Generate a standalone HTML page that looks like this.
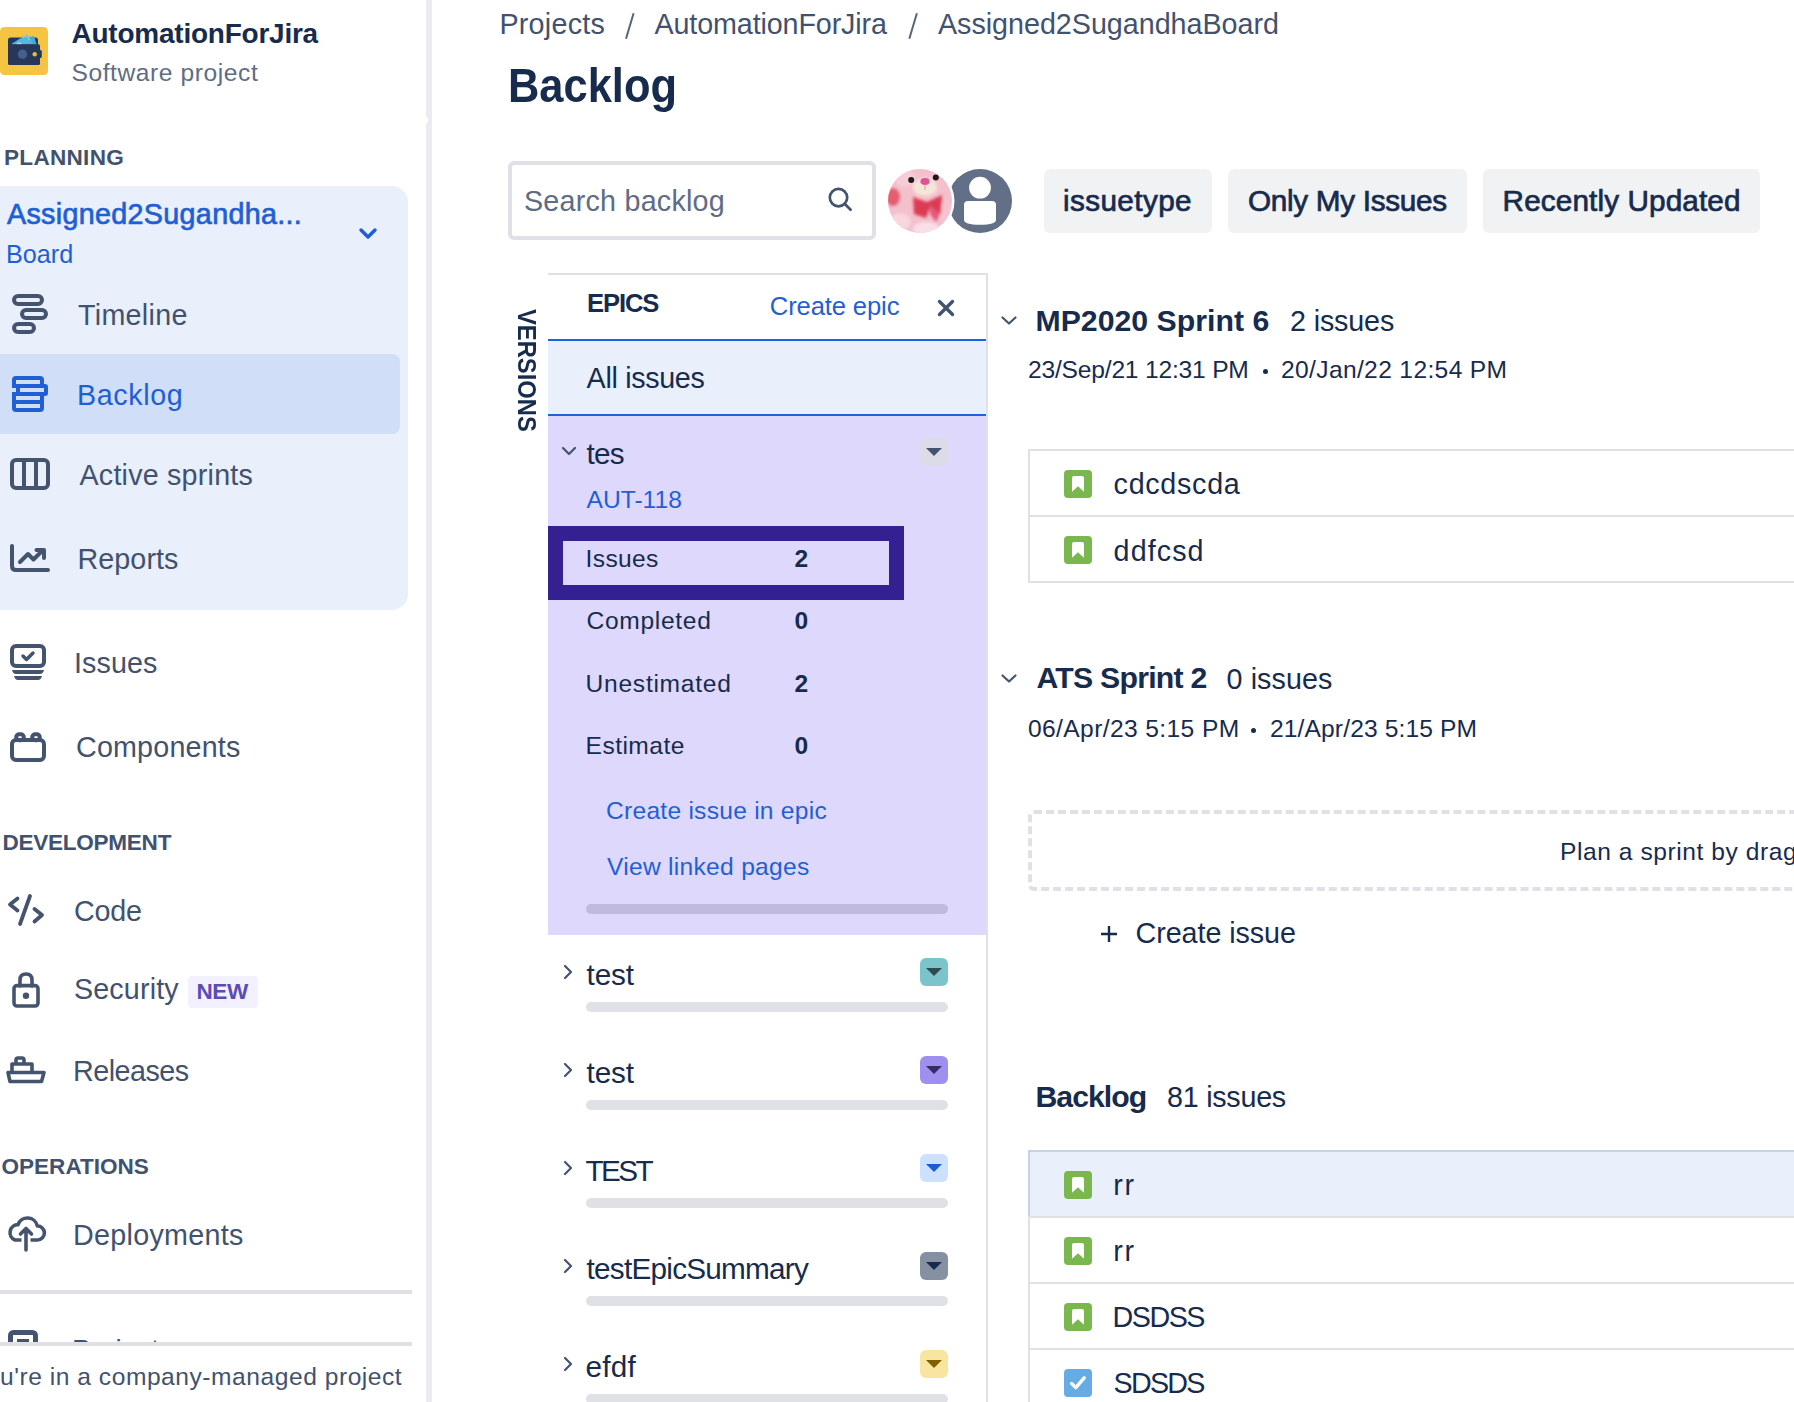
<!DOCTYPE html>
<html><head><meta charset="utf-8"><style>
html,body{margin:0;padding:0;width:1794px;height:1402px;overflow:hidden;background:#fff;font-family:'Liberation Sans', sans-serif;}
div{white-space:nowrap}
</style></head><body>
<div style="position:relative;width:1794px;height:1402px;overflow:hidden">
<div style="position:absolute;left:426px;top:0;width:6px;height:1402px;background:#ebecf0"></div><div style="position:absolute;left:423px;top:117.4px;width:5.2px;height:5.2px;border-radius:50%;background:#fff"></div>
<svg style="position:absolute;left:0;top:27px" width="48" height="48" viewBox="0 0 48 48">
<rect x="0" y="0" width="48" height="48" rx="4.5" fill="#f6c443"/>
<rect x="8" y="10.5" width="30" height="10" rx="2.5" fill="#1c3b60"/>
<polygon points="10.5,17.5 26.5,7.5 29.5,10 37,17.5" fill="#58b5de"/>
<polygon points="29.5,10 34,9 36.5,17.5 33,17.5" fill="#4aa6d3"/>
<path d="M23 10.5 L26.5 8.5 L29.5 13" stroke="#a8dff2" stroke-width="0.9" fill="none"/>
<polygon points="15,17.5 19.5,15 23,17.5" fill="#9dd5ee"/>
<rect x="8" y="17.2" width="32" height="20.8" rx="1.5" fill="#283758"/>
<rect x="30.8" y="23" width="11" height="8" rx="1.5" fill="#1e3a5f"/>
<circle cx="22.5" cy="27.2" r="4.7" fill="#42608f"/>
<circle cx="34.7" cy="27.2" r="2.2" fill="#f5b73b"/>
</svg>
<div style="position:absolute;left:0;top:186px;width:408px;height:424px;background:#e9f0fc;border-radius:0 16px 16px 0"></div>
<div style="position:absolute;left:0;top:354px;width:400px;height:80px;background:#d0def8;border-radius:0 8px 8px 0"></div>
<svg style="position:absolute;left:358px;top:226px" width="20" height="16" viewBox="0 0 20 16"><path d="M3 4 L10 11 L17 4" stroke="#1f5fd6" stroke-width="3.5" fill="none" stroke-linecap="round" stroke-linejoin="round"/></svg>
<div style="position:absolute;left:188px;top:976px;width:70px;height:32px;background:#f3f0ff;border-radius:4px"></div>
<svg style="position:absolute;left:0;top:280px" width="60" height="1000" viewBox="0 280 60 1000" fill="none" stroke="#44546f" stroke-width="4" stroke-linecap="round" stroke-linejoin="round">
<rect x="14" y="296" width="28" height="8" rx="4"/>
<rect x="22" y="310" width="24" height="8" rx="4"/>
<rect x="14" y="324" width="20" height="8" rx="4"/>
<rect x="12" y="460" width="36" height="28" rx="4"/>
<path d="M24 460 V488 M36 460 V488" stroke-linecap="butt"/>
<path d="M12 546 V566 Q12 570 16 570 H48"/>
<path d="M20 562 L28 554 L33.5 559.5 L43 550 M36.5 550 H44 V558" />
<rect x="12" y="646" width="32" height="20" rx="4"/>
<path d="M23 656 L26.5 659.5 L33 653" stroke-width="3.5"/>
<path d="M12 670 H44 Q43 674 40 674 H16 Q13 674 12 670 Z M14 676 H42 Q41 680 38 680 H18 Q15 680 14 676 Z" fill="#44546f" stroke="none"/>
<rect x="12" y="740" width="32" height="20" rx="4"/>
<rect x="16.2" y="734.3" width="7.6" height="6" rx="3"/>
<rect x="32.2" y="734.3" width="7.6" height="6" rx="3"/>
<path d="M17.5 898.5 L10 904.5 L17.5 910.5 M34.5 909 L42 915 L34.5 921.5 M30 896 L20 924" stroke-width="3.8"/>
<path d="M20 986 V980 Q20 974 26 974 Q32 974 32 980 V986" stroke-width="3.6"/>
<rect x="14" y="985.6" width="24" height="20.4" rx="3" stroke-width="3.6"/>
<circle cx="26" cy="995.8" r="3.2" fill="#44546f" stroke="none"/>
<path d="M8 1072.5 H44 L41.5 1081.5 H10 Z" stroke-width="3.6"/>
<path d="M12 1072 V1064 H32 V1072 M16 1064 V1060 Q16 1058 18 1058 H22 Q24 1058 24 1060 V1064" stroke-width="3.6" stroke-linejoin="round"/>
<path d="M21.5 1240 H15 A8 8 0 0 1 18.1 1224.6 A10 10 0 0 1 37.3 1226 A7 7 0 0 1 37.5 1240 H30.5" stroke-width="3.6" stroke-linecap="butt"/>
<path d="M26 1250 V1230 M20.5 1234 L26 1228.5 L31.5 1234" stroke-width="3.6"/>
<g fill="#1f5fd6" stroke="none">
<rect x="12" y="376" width="32" height="36" rx="4"/>
<rect x="16" y="384" width="32" height="12" rx="3"/>
</g>
<g fill="#d0def8" stroke="none">
<rect x="16" y="380" width="24" height="4"/>
<rect x="20" y="388" width="24" height="4"/>
<rect x="16" y="396" width="24" height="4"/>
<rect x="16" y="404" width="24" height="4"/>
<rect x="11" y="388" width="5" height="4"/>
</g>
</svg>
<svg style="position:absolute;left:42px;top:0" width="1" height="1"></svg>
<div style="position:absolute;left:21px;top:982px;width:10px;height:10px"></div>
<div style="position:absolute;left:0;top:1290px;width:412px;height:4px;background:#dfe1e6"></div>
<div style="position:absolute;left:0;top:1294px;width:412px;height:48px;overflow:hidden">
<svg style="position:absolute;left:8px;top:36px" width="30" height="30" viewBox="0 0 30 30" fill="none" stroke="#44546f" stroke-width="5"><rect x="2.5" y="2.5" width="25" height="26" rx="3"/><path d="M9 11 H21 M9 17 H21" stroke-width="4"/></svg>
<div style="position:absolute;left:72px;top:42px;font-family:'Liberation Sans', sans-serif;font-size:28px;color:#42526e;white-space:nowrap;line-height:28px">Project pages</div>
</div>
<div style="position:absolute;left:0;top:1342px;width:412px;height:4px;background:#dfe1e6"></div>
<svg style="position:absolute;left:600px;top:0" width="340" height="50" viewBox="600 0 340 50" stroke="#56657d" stroke-width="2"><path d="M633.6 13.3 L626 38.7 M916.9 13.3 L909.3 38.7"/></svg>
<div style="position:absolute;left:508px;top:161px;width:368px;height:79px;box-sizing:border-box;border:4px solid #dfe1e6;border-radius:6px;background:#fff"></div>
<svg style="position:absolute;left:824px;top:184px" width="34" height="34" viewBox="0 0 34 34" fill="none" stroke="#44546f" stroke-width="2.7" stroke-linecap="round"><circle cx="14.5" cy="13.6" r="8.7"/><path d="M20.9 20 L26.6 25.7"/></svg>
<svg style="position:absolute;left:884px;top:164px" width="132" height="74" viewBox="884 164 132 74">
<defs><clipPath id="pc"><circle cx="920" cy="201" r="32"/></clipPath>
<filter id="bl" x="-20%" y="-20%" width="140%" height="140%"><feGaussianBlur stdDeviation="1.6"/></filter></defs>
<circle cx="980" cy="201" r="32" fill="#626f86"/>
<circle cx="980" cy="187.7" r="10.9" fill="#fff"/>
<path d="M964 205 Q964 201 968 201 H992 Q996 201 996 205 V220 Q996 224.5 980 224.8 Q964 224.5 964 220 Z" fill="#fff"/>
<circle cx="920" cy="201" r="34.5" fill="#fff"/>
<g clip-path="url(#pc)">
<rect x="886" y="167" width="68" height="68" fill="#f3c0cc"/>
<g filter="url(#bl)">
<ellipse cx="893" cy="197" rx="7" ry="9" fill="#e45d70"/>
<ellipse cx="900" cy="222" rx="11" ry="9" fill="#f8d6de"/>
<ellipse cx="926" cy="229" rx="13" ry="7" fill="#f9dfe6"/>
<ellipse cx="947" cy="214" rx="6" ry="13" fill="#f4c5d0"/>
<ellipse cx="905" cy="178" rx="10" ry="9" fill="#f6cdd7"/>
<path d="M913 197 L927 202 L942 195 L941 214 L930 208 L926 218 L914 214 Z" fill="#dd3a52"/>
<path d="M930 205 L940 214 L936 222 L930 214 Z" fill="#e8577a"/>
<ellipse cx="925" cy="187" rx="12" ry="9" fill="#f5e6da"/>
</g>
<circle cx="911.2" cy="179.9" r="3" fill="#1a1a1a"/>
<circle cx="935.8" cy="177.6" r="3" fill="#1a1a1a"/>
<ellipse cx="925" cy="181.5" rx="4.6" ry="3.4" fill="#e2509a"/>
<path d="M925 184 V190" stroke="#e47aa5" stroke-width="0.8"/>
</g></svg>
<div style="position:absolute;left:1044px;top:169px;width:168px;height:64px;background:#f1f2f4;border-radius:6px"></div>
<div style="position:absolute;left:1228px;top:169px;width:239px;height:64px;background:#f1f2f4;border-radius:6px"></div>
<div style="position:absolute;left:1483px;top:169px;width:277px;height:64px;background:#f1f2f4;border-radius:6px"></div>
<div style="position:absolute;left:548px;top:273px;width:440px;height:2px;background:#dfe1e6"></div>
<div style="position:absolute;left:986px;top:273px;width:2px;height:1129px;background:#dfe1e6"></div>
<svg style="position:absolute;left:934px;top:296px" width="24" height="24" viewBox="0 0 24 24" stroke="#44546f" stroke-width="3.4" stroke-linecap="round"><path d="M5.5 5.5 L18.5 18.5 M18.5 5.5 L5.5 18.5"/></svg>
<div style="position:absolute;left:548px;top:339px;width:438px;height:2px;background:#1f62da"></div>
<div style="position:absolute;left:548px;top:341px;width:438px;height:73px;background:#e9f0fc"></div>
<div style="position:absolute;left:548px;top:414px;width:438px;height:2px;background:#1f62da"></div>
<div style="position:absolute;left:548px;top:416px;width:438px;height:519px;background:#dfd8fd"></div>
<svg style="position:absolute;left:559px;top:443px" width="20" height="16" viewBox="0 0 20 16"><path d="M4 5 L10 11 L16 5" stroke="#44546f" stroke-width="2.2" fill="none" stroke-linecap="round" stroke-linejoin="round"/></svg>
<div style="position:absolute;left:920px;top:438px;width:28px;height:28px;background:#dcdbe8;border-radius:6px"></div>
<svg style="position:absolute;left:920px;top:438px" width="28" height="28" viewBox="0 0 28 28"><path d="M6 10 H22 L14 18 Z" fill="#44546f"/></svg>
<div style="position:absolute;left:548px;top:526px;width:356px;height:74px;box-sizing:border-box;border:15px solid #352091"></div>
<div style="position:absolute;left:586px;top:904px;width:362px;height:10px;background:#c0bbdc;border-radius:5px"></div>
<svg style="position:absolute;left:560px;top:962px" width="16" height="22" viewBox="0 0 16 22"><path d="M5 4 L11 10 L5 16" stroke="#44546f" stroke-width="2.2" fill="none" stroke-linecap="round" stroke-linejoin="round"/></svg>
<div style="position:absolute;left:920px;top:958px;width:28px;height:28px;background:#7cc4cc;border-radius:6px"></div>
<svg style="position:absolute;left:920px;top:958px" width="28" height="28" viewBox="0 0 28 28"><path d="M6 10 H22 L14 18 Z" fill="#2d4b50"/></svg>
<div style="position:absolute;left:586px;top:1002px;width:362px;height:10px;background:#dfe1e6;border-radius:5px"></div>
<svg style="position:absolute;left:560px;top:1060px" width="16" height="22" viewBox="0 0 16 22"><path d="M5 4 L11 10 L5 16" stroke="#44546f" stroke-width="2.2" fill="none" stroke-linecap="round" stroke-linejoin="round"/></svg>
<div style="position:absolute;left:920px;top:1056px;width:28px;height:28px;background:#9f8fef;border-radius:6px"></div>
<svg style="position:absolute;left:920px;top:1056px" width="28" height="28" viewBox="0 0 28 28"><path d="M6 10 H22 L14 18 Z" fill="#352c63"/></svg>
<div style="position:absolute;left:586px;top:1100px;width:362px;height:10px;background:#dfe1e6;border-radius:5px"></div>
<svg style="position:absolute;left:560px;top:1158px" width="16" height="22" viewBox="0 0 16 22"><path d="M5 4 L11 10 L5 16" stroke="#44546f" stroke-width="2.2" fill="none" stroke-linecap="round" stroke-linejoin="round"/></svg>
<div style="position:absolute;left:920px;top:1154px;width:28px;height:28px;background:#cce0ff;border-radius:6px"></div>
<svg style="position:absolute;left:920px;top:1154px" width="28" height="28" viewBox="0 0 28 28"><path d="M6 10 H22 L14 18 Z" fill="#1d5bd6"/></svg>
<div style="position:absolute;left:586px;top:1198px;width:362px;height:10px;background:#dfe1e6;border-radius:5px"></div>
<svg style="position:absolute;left:560px;top:1256px" width="16" height="22" viewBox="0 0 16 22"><path d="M5 4 L11 10 L5 16" stroke="#44546f" stroke-width="2.2" fill="none" stroke-linecap="round" stroke-linejoin="round"/></svg>
<div style="position:absolute;left:920px;top:1252px;width:28px;height:28px;background:#8590a2;border-radius:6px"></div>
<svg style="position:absolute;left:920px;top:1252px" width="28" height="28" viewBox="0 0 28 28"><path d="M6 10 H22 L14 18 Z" fill="#172b4d"/></svg>
<div style="position:absolute;left:586px;top:1296px;width:362px;height:10px;background:#dfe1e6;border-radius:5px"></div>
<svg style="position:absolute;left:560px;top:1354px" width="16" height="22" viewBox="0 0 16 22"><path d="M5 4 L11 10 L5 16" stroke="#44546f" stroke-width="2.2" fill="none" stroke-linecap="round" stroke-linejoin="round"/></svg>
<div style="position:absolute;left:920px;top:1350px;width:28px;height:28px;background:#f8e6a0;border-radius:6px"></div>
<svg style="position:absolute;left:920px;top:1350px" width="28" height="28" viewBox="0 0 28 28"><path d="M6 10 H22 L14 18 Z" fill="#7f5f01"/></svg>
<div style="position:absolute;left:586px;top:1394px;width:362px;height:10px;background:#dfe1e6;border-radius:5px"></div>
<svg style="position:absolute;left:999px;top:313px" width="20" height="16" viewBox="0 0 20 16"><path d="M3.5 4.5 L10 10.5 L16.5 4.5" stroke="#44546f" stroke-width="2.2" fill="none" stroke-linecap="round" stroke-linejoin="round"/></svg>
<div style="position:absolute;left:1263px;top:369px;width:5px;height:5px;background:#172b4d;border-radius:50%"></div>
<div style="position:absolute;left:1028px;top:449px;width:800px;height:134px;box-sizing:border-box;border:2px solid #dfe1e6"></div>
<div style="position:absolute;left:1028px;top:515px;width:800px;height:2px;background:#dfe1e6"></div>
<svg style="position:absolute;left:1064px;top:469.5px" width="28" height="28" viewBox="0 0 28 28"><rect width="28" height="28" rx="4" fill="#7ab74e"/><path d="M8 8 Q8 6 10 6 H18 Q20 6 20 8 V21.8 L14 16.2 L8 21.8 Z" fill="#fff"/></svg>
<svg style="position:absolute;left:1064px;top:535.5px" width="28" height="28" viewBox="0 0 28 28"><rect width="28" height="28" rx="4" fill="#7ab74e"/><path d="M8 8 Q8 6 10 6 H18 Q20 6 20 8 V21.8 L14 16.2 L8 21.8 Z" fill="#fff"/></svg>
<svg style="position:absolute;left:999px;top:671px" width="20" height="16" viewBox="0 0 20 16"><path d="M3.5 4.5 L10 10.5 L16.5 4.5" stroke="#44546f" stroke-width="2.2" fill="none" stroke-linecap="round" stroke-linejoin="round"/></svg>
<div style="position:absolute;left:1251px;top:728px;width:5px;height:5px;background:#172b4d;border-radius:50%"></div>
<div style="position:absolute;left:1028px;top:810px;width:800px;height:81px;box-sizing:border-box;border:4px dashed #dfe1e6;border-radius:6px"></div>
<svg style="position:absolute;left:1098px;top:923px" width="22" height="22" viewBox="0 0 22 22" stroke="#172b4d" stroke-width="2.4"><path d="M11 3 V19 M3 11 H19"/></svg>
<div style="position:absolute;left:1028px;top:1150px;width:800px;height:300px;box-sizing:border-box;border:2px solid #dfe1e6;border-bottom:none"></div>
<div style="position:absolute;left:1028px;top:1150px;width:800px;height:66px;box-sizing:border-box;border:2px solid #c9d1e4;border-bottom:none;background:#e9f0fc"></div>
<div style="position:absolute;left:1028px;top:1216px;width:800px;height:2px;background:#dfe1e6"></div>
<div style="position:absolute;left:1028px;top:1282px;width:800px;height:2px;background:#dfe1e6"></div>
<div style="position:absolute;left:1028px;top:1348px;width:800px;height:2px;background:#dfe1e6"></div>
<svg style="position:absolute;left:1064px;top:1171px" width="28" height="28" viewBox="0 0 28 28"><rect width="28" height="28" rx="4" fill="#7ab74e"/><path d="M8 8 Q8 6 10 6 H18 Q20 6 20 8 V21.8 L14 16.2 L8 21.8 Z" fill="#fff"/></svg>
<svg style="position:absolute;left:1064px;top:1237px" width="28" height="28" viewBox="0 0 28 28"><rect width="28" height="28" rx="4" fill="#7ab74e"/><path d="M8 8 Q8 6 10 6 H18 Q20 6 20 8 V21.8 L14 16.2 L8 21.8 Z" fill="#fff"/></svg>
<svg style="position:absolute;left:1064px;top:1303px" width="28" height="28" viewBox="0 0 28 28"><rect width="28" height="28" rx="4" fill="#7ab74e"/><path d="M8 8 Q8 6 10 6 H18 Q20 6 20 8 V21.8 L14 16.2 L8 21.8 Z" fill="#fff"/></svg>
<svg style="position:absolute;left:1064px;top:1369px" width="28" height="28" viewBox="0 0 28 28"><rect width="28" height="28" rx="4" fill="#67abe4"/><path d="M7.6 14.6 L11.8 18.6 L20.2 8.8" stroke="#fff" stroke-width="3.4" fill="none" stroke-linecap="round" stroke-linejoin="round"/></svg>
<div style="position:absolute;left:71.5px;top:19.7px;font-size:27.98px;line-height:27.98px;font-weight:700;color:#172b4d;letter-spacing:-0.22px">AutomationForJira</div>
<div style="position:absolute;left:71.5px;top:60.6px;font-size:24.6px;line-height:24.6px;font-weight:400;color:#5e6c84;letter-spacing:0.57px">Software project</div>
<div style="position:absolute;left:4.0px;top:147.3px;font-size:22.55px;line-height:22.55px;font-weight:700;color:#42526e;letter-spacing:0.29px">PLANNING</div>
<div style="position:absolute;left:7.0px;top:200.1px;font-size:28.7px;line-height:28.7px;font-weight:400;-webkit-text-stroke:0.7px #1f5fd6;color:#1f5fd6;letter-spacing:0.32px">Assigned2Sugandha...</div>
<div style="position:absolute;left:6.0px;top:242.1px;font-size:25.21px;line-height:25.21px;font-weight:400;color:#1f5fd6;letter-spacing:0.00px">Board</div>
<div style="position:absolute;left:78.0px;top:301.1px;font-size:28.7px;line-height:28.7px;font-weight:400;color:#42526e;letter-spacing:0.29px">Timeline</div>
<div style="position:absolute;left:77.0px;top:381.1px;font-size:28.7px;line-height:28.7px;font-weight:400;color:#1f5fd6;letter-spacing:0.60px">Backlog</div>
<div style="position:absolute;left:79.5px;top:461.1px;font-size:28.7px;line-height:28.7px;font-weight:400;color:#42526e;letter-spacing:0.21px">Active sprints</div>
<div style="position:absolute;left:77.5px;top:544.6px;font-size:28.7px;line-height:28.7px;font-weight:400;color:#42526e;letter-spacing:0.08px">Reports</div>
<div style="position:absolute;left:74.0px;top:649.1px;font-size:28.7px;line-height:28.7px;font-weight:400;color:#42526e;letter-spacing:0.08px">Issues</div>
<div style="position:absolute;left:76.0px;top:732.6px;font-size:28.7px;line-height:28.7px;font-weight:400;color:#42526e;letter-spacing:0.18px">Components</div>
<div style="position:absolute;left:74.0px;top:897.1px;font-size:28.7px;line-height:28.7px;font-weight:400;color:#42526e;letter-spacing:-0.20px">Code</div>
<div style="position:absolute;left:74.0px;top:975.1px;font-size:28.7px;line-height:28.7px;font-weight:400;color:#42526e;letter-spacing:0.14px">Security</div>
<div style="position:absolute;left:73.0px;top:1057.1px;font-size:28.7px;line-height:28.7px;font-weight:400;color:#42526e;letter-spacing:-0.51px">Releases</div>
<div style="position:absolute;left:73.0px;top:1221.1px;font-size:28.7px;line-height:28.7px;font-weight:400;color:#42526e;letter-spacing:0.30px">Deployments</div>
<div style="position:absolute;left:2.4px;top:831.7px;font-size:22.55px;line-height:22.55px;font-weight:700;color:#42526e;letter-spacing:-0.26px">DEVELOPMENT</div>
<div style="position:absolute;left:1.5px;top:1155.6px;font-size:22.55px;line-height:22.55px;font-weight:700;color:#42526e;letter-spacing:0.00px">OPERATIONS</div>
<div style="position:absolute;left:196.4px;top:980.9px;font-size:22.55px;line-height:22.55px;font-weight:700;color:#5b4cb4;letter-spacing:-0.35px">NEW</div>
<div style="position:absolute;left:0.0px;top:1364.6px;font-size:24.6px;line-height:24.6px;font-weight:400;color:#42526e;letter-spacing:0.53px">u're in a company-managed project</div>
<div style="position:absolute;left:499.4px;top:9.9px;font-size:28.7px;line-height:28.7px;font-weight:400;color:#42526e;letter-spacing:0.26px">Projects</div>
<div style="position:absolute;left:654.5px;top:9.9px;font-size:28.7px;line-height:28.7px;font-weight:400;color:#42526e;letter-spacing:-0.12px">AutomationForJira</div>
<div style="position:absolute;left:938.0px;top:9.9px;font-size:28.7px;line-height:28.7px;font-weight:400;color:#42526e;letter-spacing:-0.02px">Assigned2SugandhaBoard</div>
<div style="position:absolute;left:508.3px;top:60.6px;font-size:49px;line-height:49px;font-weight:700;color:#172b4d;transform:scaleX(0.8865);transform-origin:0 0">Backlog</div>
<div style="position:absolute;left:524.0px;top:187.1px;font-size:28.7px;line-height:28.7px;font-weight:400;color:#5e6c84;letter-spacing:0.23px">Search backlog</div>
<div style="position:absolute;left:1063.0px;top:186.2px;font-size:29.72px;line-height:29.72px;font-weight:400;-webkit-text-stroke:0.7px #172b4d;color:#172b4d;letter-spacing:0.38px">issuetype</div>
<div style="position:absolute;left:1248.0px;top:186.2px;font-size:29.72px;line-height:29.72px;font-weight:400;-webkit-text-stroke:0.7px #172b4d;color:#172b4d;letter-spacing:-0.31px">Only My Issues</div>
<div style="position:absolute;left:1502.6px;top:186.2px;font-size:29.72px;line-height:29.72px;font-weight:400;-webkit-text-stroke:0.7px #172b4d;color:#172b4d;letter-spacing:0.11px">Recently Updated</div>
<div style="position:absolute;left:514px;top:309.4px;writing-mode:vertical-rl;font-size:25px;font-weight:700;color:#172b4d;line-height:25px;transform:scaleY(0.95);transform-origin:0 0">VERSIONS</div>
<div style="position:absolute;left:587.0px;top:290.7px;font-size:25.62px;line-height:25.62px;font-weight:700;color:#172b4d;letter-spacing:-1.10px">EPICS</div>
<div style="position:absolute;left:769.8px;top:294.3px;font-size:25.62px;line-height:25.62px;font-weight:400;color:#1f5fd6;letter-spacing:-0.13px">Create epic</div>
<div style="position:absolute;left:586.6px;top:364.1px;font-size:28.7px;line-height:28.7px;font-weight:400;color:#172b4d;letter-spacing:-0.33px">All issues</div>
<div style="position:absolute;left:586.6px;top:439.2px;font-size:29.72px;line-height:29.72px;font-weight:400;color:#172b4d;letter-spacing:-0.80px">tes</div>
<div style="position:absolute;left:586.6px;top:487.8px;font-size:24.6px;line-height:24.6px;font-weight:400;color:#1f5fd6;letter-spacing:0.00px">AUT-118</div>
<div style="position:absolute;left:585.6px;top:547.4px;font-size:24.6px;line-height:24.6px;font-weight:400;color:#172b4d;letter-spacing:0.34px">Issues</div>
<div style="position:absolute;left:794.6px;top:547.4px;font-size:24.6px;line-height:24.6px;font-weight:700;color:#172b4d;letter-spacing:0.00px">2</div>
<div style="position:absolute;left:586.6px;top:609.4px;font-size:24.6px;line-height:24.6px;font-weight:400;color:#172b4d;letter-spacing:0.66px">Completed</div>
<div style="position:absolute;left:794.6px;top:609.4px;font-size:24.6px;line-height:24.6px;font-weight:700;color:#172b4d;letter-spacing:0.00px">0</div>
<div style="position:absolute;left:585.6px;top:672.0px;font-size:24.6px;line-height:24.6px;font-weight:400;color:#172b4d;letter-spacing:0.72px">Unestimated</div>
<div style="position:absolute;left:794.6px;top:672.0px;font-size:24.6px;line-height:24.6px;font-weight:700;color:#172b4d;letter-spacing:0.00px">2</div>
<div style="position:absolute;left:585.6px;top:733.9px;font-size:24.6px;line-height:24.6px;font-weight:400;color:#172b4d;letter-spacing:0.44px">Estimate</div>
<div style="position:absolute;left:794.6px;top:733.9px;font-size:24.6px;line-height:24.6px;font-weight:700;color:#172b4d;letter-spacing:0.00px">0</div>
<div style="position:absolute;left:606.0px;top:799.3px;font-size:24.6px;line-height:24.6px;font-weight:400;color:#1f5fd6;letter-spacing:0.25px">Create issue in epic</div>
<div style="position:absolute;left:607.0px;top:854.5px;font-size:24.6px;line-height:24.6px;font-weight:400;color:#1f5fd6;letter-spacing:0.28px">View linked pages</div>
<div style="position:absolute;left:586.6px;top:959.7px;font-size:29.72px;line-height:29.72px;font-weight:400;color:#172b4d;letter-spacing:-0.20px">test</div>
<div style="position:absolute;left:586.6px;top:1058.2px;font-size:29.72px;line-height:29.72px;font-weight:400;color:#172b4d;letter-spacing:-0.20px">test</div>
<div style="position:absolute;left:585.6px;top:1156.0px;font-size:29.72px;line-height:29.72px;font-weight:400;color:#172b4d;letter-spacing:-2.67px">TEST</div>
<div style="position:absolute;left:586.6px;top:1254.2px;font-size:29.72px;line-height:29.72px;font-weight:400;color:#172b4d;letter-spacing:-0.76px">testEpicSummary</div>
<div style="position:absolute;left:585.6px;top:1352.2px;font-size:29.72px;line-height:29.72px;font-weight:400;color:#172b4d;letter-spacing:0.17px">efdf</div>
<div style="position:absolute;left:1035.5px;top:305.6px;font-size:30.24px;line-height:30.24px;font-weight:700;color:#172b4d;letter-spacing:0.01px">MP2020 Sprint 6</div>
<div style="position:absolute;left:1290.0px;top:306.9px;font-size:28.7px;line-height:28.7px;font-weight:400;color:#172b4d;letter-spacing:-0.14px">2 issues</div>
<div style="position:absolute;left:1028.0px;top:358.1px;font-size:24.6px;line-height:24.6px;font-weight:400;color:#172b4d;letter-spacing:-0.20px">23/Sep/21 12:31 PM</div>
<div style="position:absolute;left:1281.0px;top:358.1px;font-size:24.6px;line-height:24.6px;font-weight:400;color:#172b4d;letter-spacing:0.35px">20/Jan/22 12:54 PM</div>
<div style="position:absolute;left:1113.6px;top:470.1px;font-size:28.7px;line-height:28.7px;font-weight:400;color:#172b4d;letter-spacing:0.71px">cdcdscda</div>
<div style="position:absolute;left:1113.6px;top:536.6px;font-size:28.7px;line-height:28.7px;font-weight:400;color:#172b4d;letter-spacing:1.08px">ddfcsd</div>
<div style="position:absolute;left:1036.5px;top:663.2px;font-size:30.24px;line-height:30.24px;font-weight:700;color:#172b4d;letter-spacing:-0.77px">ATS Sprint 2</div>
<div style="position:absolute;left:1226.6px;top:664.5px;font-size:28.7px;line-height:28.7px;font-weight:400;color:#172b4d;letter-spacing:0.06px">0 issues</div>
<div style="position:absolute;left:1028.0px;top:716.9px;font-size:24.6px;line-height:24.6px;font-weight:400;color:#172b4d;letter-spacing:0.38px">06/Apr/23 5:15 PM</div>
<div style="position:absolute;left:1270.0px;top:716.9px;font-size:24.6px;line-height:24.6px;font-weight:400;color:#172b4d;letter-spacing:0.12px">21/Apr/23 5:15 PM</div>
<div style="position:absolute;left:1560.0px;top:840.1px;font-size:24.6px;line-height:24.6px;font-weight:400;color:#172b4d;letter-spacing:0.55px">Plan a sprint by dragging issues</div>
<div style="position:absolute;left:1135.6px;top:918.7px;font-size:28.7px;line-height:28.7px;font-weight:400;color:#172b4d;letter-spacing:-0.07px">Create issue</div>
<div style="position:absolute;left:1035.5px;top:1081.7px;font-size:30.24px;line-height:30.24px;font-weight:700;color:#172b4d;letter-spacing:-1.00px">Backlog</div>
<div style="position:absolute;left:1167.0px;top:1083.0px;font-size:28.7px;line-height:28.7px;font-weight:400;color:#172b4d;letter-spacing:-0.25px">81 issues</div>
<div style="position:absolute;left:1113.3px;top:1170.9px;font-size:28.7px;line-height:28.7px;font-weight:400;color:#172b4d;letter-spacing:1.60px">rr</div>
<div style="position:absolute;left:1113.3px;top:1236.8px;font-size:28.7px;line-height:28.7px;font-weight:400;color:#172b4d;letter-spacing:1.60px">rr</div>
<div style="position:absolute;left:1112.6px;top:1303.1px;font-size:28.7px;line-height:28.7px;font-weight:400;color:#172b4d;letter-spacing:-1.50px">DSDSS</div>
<div style="position:absolute;left:1113.6px;top:1369.1px;font-size:28.7px;line-height:28.7px;font-weight:400;color:#172b4d;letter-spacing:-1.75px">SDSDS</div>
</div>
</body></html>
